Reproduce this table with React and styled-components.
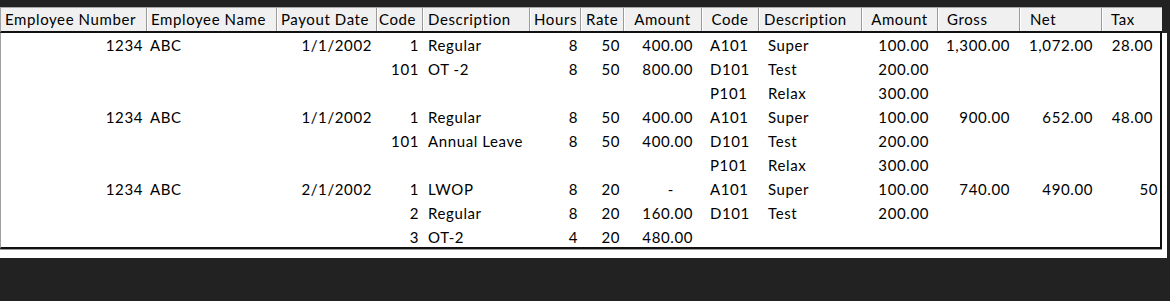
import styled, { createGlobalStyle } from 'styled-components'

const GlobalStyle = createGlobalStyle`
  html, body {
    margin: 0;
    padding: 0;
    background: #222222;
  }
  body {
    font-family: Lato, "Open Sans", sans-serif;
  }
`

const widths = [146, 130, 100, 46, 107, 51, 43, 78, 57, 103, 76, 82, 82, 60]
const template = widths.map(w => `${w}px`).join(' ')

const headers = [
  { label: 'Employee Number', align: 'left', pad: 4 },
  { label: 'Employee Name', align: 'left', pad: 4 },
  { label: 'Payout Date', align: 'left', pad: 4 },
  { label: 'Code', align: 'left', pad: 2 },
  { label: 'Description', align: 'left', pad: 5 },
  { label: 'Hours', align: 'left', pad: 4 },
  { label: 'Rate', align: 'left', pad: 5 },
  { label: 'Amount', align: 'center', pad: 0 },
  { label: 'Code', align: 'center', pad: 0 },
  { label: 'Description', align: 'left', pad: 5 },
  { label: 'Amount', align: 'center', pad: 0 },
  { label: 'Gross', align: 'left', pad: 9 },
  { label: 'Net', align: 'left', pad: 10 },
  { label: 'Tax', align: 'left', pad: 9 },
]

const cols = [
  { align: 'right', pad: 4 },
  { align: 'left', pad: 3 },
  { align: 'right', pad: 5 },
  { align: 'right', pad: 4 },
  { align: 'left', pad: 5 },
  { align: 'right', pad: 3 },
  { align: 'right', pad: 4 },
  { align: 'right', pad: 9 },
  { align: 'left', pad: 8 },
  { align: 'left', pad: 9 },
  { align: 'right', pad: 9 },
  { align: 'right', pad: 10 },
  { align: 'right', pad: 9 },
  { align: 'right', pad: 9 },
]

const rows = [
  ['1234', 'ABC', '1/1/2002', '1', 'Regular', '8', '50', '400.00', 'A101', 'Super', '100.00', '1,300.00', '1,072.00', '28.00'],
  ['', '', '', '101', 'OT -2', '8', '50', '800.00', 'D101', 'Test', '200.00', '', '', ''],
  ['', '', '', '', '', '', '', '', 'P101', 'Relax', '300.00', '', '', ''],
  ['1234', 'ABC', '1/1/2002', '1', 'Regular', '8', '50', '400.00', 'A101', 'Super', '100.00', '900.00', '652.00', '48.00'],
  ['', '', '', '101', 'Annual Leave', '8', '50', '400.00', 'D101', 'Test', '200.00', '', '', ''],
  ['', '', '', '', '', '', '', '', 'P101', 'Relax', '300.00', '', '', ''],
  ['1234', 'ABC', '2/1/2002', '1', 'LWOP', '8', '20', '-', 'A101', 'Super', '100.00', '740.00', '490.00', '50'],
  ['', '', '', '2', 'Regular', '8', '20', '160.00', 'D101', 'Test', '200.00', '', '', ''],
  ['', '', '', '3', 'OT-2', '4', '20', '480.00', '', '', '', '', '', ''],
]

const Page = styled.div`
  height: 301px;
  padding-top: 7px;
  box-sizing: border-box;
  background: #222222;
`

const HeaderRow = styled.div`
  display: grid;
  grid-template-columns: ${template};
  width: 1162px;
  height: 26px;
  box-sizing: border-box;
  background: #f0f0f0;
  border-top: 1px solid #a8a8a8;
  border-left: 1px solid #a0a0a0;
  border-bottom: 2px solid #111111;
`

const HeadCell = styled.div`
  display: flex;
  align-items: center;
  justify-content: ${({ $align }) => ($align === 'center' ? 'center' : 'flex-start')};
  padding-left: ${({ $pad }) => $pad}px;
  padding-bottom: 1px;
  font-size: 15px;
  letter-spacing: 0.6px;
  color: #000;
  white-space: nowrap;
  overflow: hidden;
  border-right: 1px solid #9a9a9a;
  box-shadow: inset 1px 0 0 #ffffff;
  &:first-child {
    box-shadow: none;
  }
  &:last-child {
    border-right: none;
  }
`

const BodyArea = styled.div`
  width: 1167px;
  background: #ffffff;
  padding-bottom: 9px;
`

const Grid = styled.div`
  display: grid;
  grid-template-columns: ${template};
  grid-auto-rows: 24px;
  width: 1162px;
  height: 216px;
  overflow: hidden;
  box-sizing: border-box;
  border-left: 1px solid #a0a0a0;
  border-right: 2px solid #111111;
  border-bottom: 2px solid #111111;
  box-shadow: 0 1px 0 #9a9a9a;
`

const Cell = styled.div`
  display: flex;
  align-items: center;
  justify-content: ${({ $align }) => ($align === 'right' ? 'flex-end' : 'flex-start')};
  padding-left: ${({ $align, $pad }) => ($align === 'left' ? $pad : 0)}px;
  padding-right: ${({ $align, $pad }) => ($align === 'right' ? $pad : 0)}px;
  font-size: 15px;
  letter-spacing: 0.6px;
  color: #000;
  white-space: nowrap;
`

const cellPad = (value, i) => {
  if (value === '-') return 28
  if (i === 13 && !value.includes('.')) return 4
  return cols[i].pad
}

const App = () => {
  return (
    <Page>
      <GlobalStyle />
      <HeaderRow>
        {headers.map((h, i) => (
          <HeadCell key={i} $align={h.align} $pad={h.pad}>{h.label}</HeadCell>
        ))}
      </HeaderRow>
      <BodyArea>
        <Grid>
          {rows.map((row, r) =>
            row.map((value, i) => (
              <Cell key={`${r}-${i}`} $align={cols[i].align} $pad={cellPad(value, i)}>
                {value}
              </Cell>
            ))
          )}
        </Grid>
      </BodyArea>
    </Page>
  )
}

export default App
